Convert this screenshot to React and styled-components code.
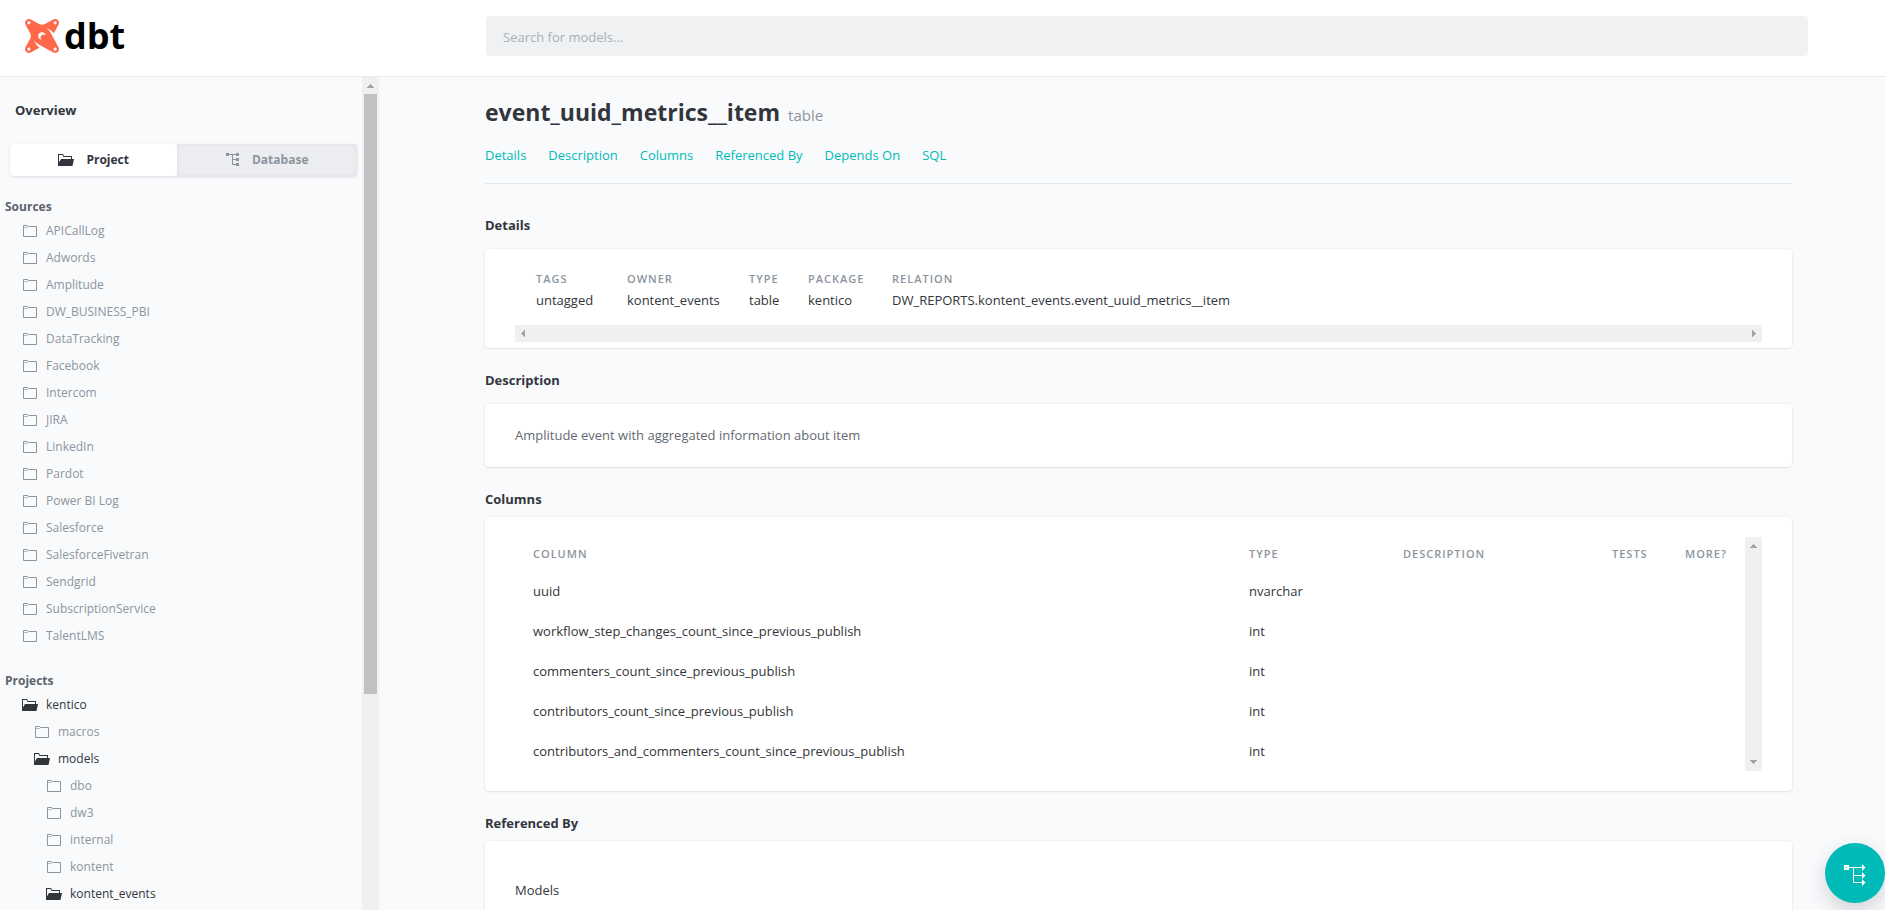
import { useState } from 'react';
import styled, { createGlobalStyle } from 'styled-components';
import { SiDbt } from 'react-icons/si';

const GlobalStyle = createGlobalStyle`
  * { box-sizing: border-box; }
  body {
    margin: 0;
    background: #f9fafc;
    color: #32363c;
    font-family: "Segoe UI", "Open Sans", "Noto Sans", sans-serif;
    font-size: 13px;
    line-height: 20px;
  }
`

const Page = styled.div`
  display: flex;
  flex-direction: column;
  height: 100vh;
  overflow: hidden;
`
const Header = styled.header`
  display: flex;
  flex: none;
  align-items: flex-start;
  padding: 16px 77px 20px 25px;
  background: #fff;
  border-bottom: 1px solid #e9ebee;
`
const Logo = styled.a`
  display: flex;
  align-items: center;
  gap: 5px;
  width: 461px;
  height: 40px;
  color: #000;
  font-size: 36px;
  font-weight: 700;
  line-height: 40px;
  text-decoration: none;
  svg { color: #ff694a; }
`
const Search = styled.input`
  flex: 1;
  height: 40px;
  padding: 1px 17px 0;
  border: none;
  border-radius: 4px;
  outline: none;
  background: #eff1f3;
  color: #32363c;
  font: inherit;
  &::placeholder { color: #a8b0b8; opacity: 1; }
`
const Body = styled.div`
  display: flex;
  flex: 1;
  min-height: 0;
`
const Sidebar = styled.aside`
  display: flex;
  flex: none;
  width: 379px;
`
const SidebarContent = styled.nav`
  flex: 1;
  overflow: hidden;
  font-size: 12px;
`
const Overview = styled.a`
  display: block;
  padding: 23px 15px 24px;
  color: #32363c;
  font-size: 13px;
  font-weight: 700;
  text-decoration: none;
`
const Tabs = styled.div`
  display: flex;
  height: 32px;
  margin: 0 5px 21px 10px;
  border-radius: 4px;
  background: #ebedf1;
  box-shadow: 0 1px 3px rgba(50, 54, 60, 0.15);
`
const Tab = styled.button`
  display: flex;
  flex: ${p => (p.$active ? '167' : '180')};
  align-items: center;
  justify-content: center;
  gap: 12px;
  border: none;
  border-radius: 4px;
  background: ${p => (p.$active ? '#fff' : '#ebedf1')};
  box-shadow: ${p => (p.$active ? 'none' : 'inset 0 0 4px rgba(50, 54, 60, 0.08)')};
  color: ${p => (p.$active ? '#32363c' : '#8c959e')};
  font: inherit;
  font-weight: 700;
`
const TreeTitle = styled.h2`
  margin: 0;
  padding: 0 5px;
  color: #5c636b;
  font-size: 12px;
  font-weight: 700;
  line-height: 20px;
`
const Tree = styled.ul`
  margin: 0 0 22px;
  padding: 0;
  list-style: none;
`
const TreeItem = styled.a`
  display: flex;
  align-items: center;
  gap: 8px;
  height: 27px;
  padding-left: ${p => 22 + p.$level * 12}px;
  color: ${p => (p.$open ? '#32363c' : '#8c959e')};
  text-decoration: none;
`
const Scrollbar = styled.div`
  display: flex;
  flex: none;
  flex-direction: ${p => (p.$horizontal ? 'row' : 'column')};
  justify-content: space-between;
  width: ${p => (p.$horizontal ? 'auto' : '17px')};
  height: ${p => (p.$horizontal ? '17px' : 'auto')};
  background: #f0f0f0;
`
const ScrollArrow = styled.span`
  display: flex;
  flex: none;
  align-items: center;
  justify-content: center;
  width: 17px;
  height: 17px;
  color: #a3a3a3;
`
const Thumb = styled.div`
  flex: 0 0 72%;
  width: 13px;
  margin: 0 2px auto;
  background: #c1c1c1;
`
const Main = styled.main`
  flex: 1;
  min-width: 0;
  padding: 19px 93px 0 106px;
`
const Title = styled.h1`
  display: flex;
  align-items: baseline;
  gap: 8px;
  height: 32px;
  margin: 0;
  font-size: 23px;
  font-weight: 700;
  line-height: 32px;
  small {
    color: #8c959e;
    font-size: 15px;
    font-weight: 400;
    line-height: 20px;
  }
`
const Links = styled.nav`
  display: flex;
  gap: 22px;
  padding: 17px 0 18px;
  margin-bottom: 31px;
  border-bottom: 1px solid #e4e7ea;
  a {
    color: #00bab8;
    text-decoration: none;
  }
`
const Section = styled.section`
  margin-bottom: 22px;
`
const SectionTitle = styled.h2`
  margin: 0 0 ${p => (p.$tight ? '8px' : '14px')};
  font-size: 13px;
  font-weight: 700;
  line-height: 20px;
`
const Card = styled.div`
  padding: ${p => p.$padding || '20px 30px'};
  border-radius: 4px;
  background: #fff;
  box-shadow: 0 0 2px rgba(50, 54, 60, 0.12), 0 1px 2px rgba(50, 54, 60, 0.08);
`
const DetailList = styled.dl`
  display: flex;
  margin: 0;
  padding: 20px 21px 15px;
`
const Detail = styled.div`
  flex: none;
  width: ${p => p.$width};
  white-space: nowrap;
`
const DetailLabel = styled.dt`
  margin-bottom: 1px;
  color: #8c959e;
  font-size: 11px;
  font-weight: 600;
  letter-spacing: 1px;
  text-transform: uppercase;
`
const DetailValue = styled.dd`
  margin: 0;
`
const Description = styled.p`
  margin: 0;
  color: #646970;
  line-height: 23px;
`
const TableWrap = styled.div`
  display: flex;
`
const Table = styled.table`
  flex: 1;
  table-layout: fixed;
  border-collapse: collapse;
  th, td {
    height: 40px;
    padding: 0 0 0 18px;
    text-align: left;
  }
  th {
    height: 34px;
    color: #8c959e;
    font-size: 11px;
    font-weight: 600;
    letter-spacing: 1px;
    text-transform: uppercase;
  }
`
const Fab = styled.button`
  position: fixed;
  right: 0;
  bottom: 7px;
  display: flex;
  align-items: center;
  justify-content: center;
  width: 60px;
  height: 60px;
  padding: 3px 0 0;
  border: none;
  border-radius: 50%;
  background: #00bab8;
  box-shadow: 0 8px 20px rgba(50, 54, 60, 0.2);
  color: #fff;
`

const sources = [
  'APICallLog', 'Adwords', 'Amplitude', 'DW_BUSINESS_PBI', 'DataTracking', 'Facebook',
  'Intercom', 'JIRA', 'LinkedIn', 'Pardot', 'Power BI Log', 'Salesforce',
  'SalesforceFivetran', 'Sendgrid', 'SubscriptionService', 'TalentLMS',
].map(name => ({ name, level: 0 }))

const projects = [
  { name: 'kentico', level: 0, open: true },
  { name: 'macros', level: 1 },
  { name: 'models', level: 1, open: true },
  { name: 'dbo', level: 2 },
  { name: 'dw3', level: 2 },
  { name: 'internal', level: 2 },
  { name: 'kontent', level: 2 },
  { name: 'kontent_events', level: 2, open: true },
]

const links = ['Details', 'Description', 'Columns', 'Referenced By', 'Depends On', 'SQL']

const details = [
  { label: 'Tags', value: 'untagged', width: '91px' },
  { label: 'Owner', value: 'kontent_events', width: '122px' },
  { label: 'Type', value: 'table', width: '59px' },
  { label: 'Package', value: 'kentico', width: '84px' },
  { label: 'Relation', value: 'DW_REPORTS.kontent_events.event_uuid_metrics__item', width: 'auto' },
]

const columns = [
  { name: 'uuid', type: 'nvarchar' },
  { name: 'workflow_step_changes_count_since_previous_publish', type: 'int' },
  { name: 'commenters_count_since_previous_publish', type: 'int' },
  { name: 'contributors_count_since_previous_publish', type: 'int' },
  { name: 'contributors_and_commenters_count_since_previous_publish', type: 'int' },
]

const arrows = {
  up: 'M5 10h7v1H5zM6 9h5v1H6zM7 8h3v1H7zM8 7h1v1H8z',
  down: 'M5 6h7v1H5zM6 7h5v1H6zM7 8h3v1H7zM8 9h1v1H8z',
  left: 'M9 5h1v7H9zM8 6h1v5H8zM7 7h1v3H7zM6 8h1v1H6z',
  right: 'M7 5h1v7H7zM8 6h1v5H8zM9 7h1v3H9zM10 8h1v1H10z',
}

function Arrow({ dir }) {
  return (
    <ScrollArrow>
      <svg width="17" height="17" fill="currentColor"><path d={arrows[dir]} /></svg>
    </ScrollArrow>
  )
}

function FolderIcon({ open }) {
  return open ? (
    <svg width="16" height="12" viewBox="0 0 16 12" fill="currentColor">
      <path d="M0 0h5l1 2h8v3h-1V3H5.500L4.500 1H1v8L0 11z" />
      <path d="M3 5h13l-1.500 7H0V10z" />
    </svg>
  ) : (
    <svg width="16" height="12" viewBox="0 0 16 12" fill="none" stroke="currentColor">
      <path d="M1.500 11.500V.5h4l1 1h8v10z" />
      <path d="M2 2.500h4" strokeOpacity="0.6" />
    </svg>
  )
}

function TreeIcon() {
  return (
    <svg width="14" height="14" viewBox="0 0 14 14" fill="currentColor">
      <path d="M0 0h3v1h7V0h3v3h-3V2H7v4h3V5h3v3h-3V7H7v4h3v-1h3v3h-3v-1H6V2H3v1H0z" />
    </svg>
  )
}

function GraphIcon() {
  return (
    <svg width="22" height="22" viewBox="0 0 22 22" fill="currentColor">
      <path fillRule="evenodd" d="M0 1h5v5H0zM2 3v1h1V3z" />
      <path d="M5 3h13v1H5zM9 4h1v15H9zM10 11h8v1h-8zM10 18h8v1h-8z" />
      <path d="M18 0l3.500 3.500-3.500 3.500zM18 8l3.500 3.500-3.500 3.500zM18 15l3.500 3.500-3.500 3.500z" />
    </svg>
  )
}

function FolderTree({ title, items }) {
  return (
    <>
      <TreeTitle>{title}</TreeTitle>
      <Tree>
        {items.map(item => (
          <li key={item.name}>
            <TreeItem href="#" $level={item.level} $open={item.open}>
              <FolderIcon open={item.open} />
              {item.name}
            </TreeItem>
          </li>
        ))}
      </Tree>
    </>
  )
}

function App() {
  const [query, setQuery] = useState('')
  const [tab, setTab] = useState('project')

  return (
    <Page>
      <GlobalStyle />
      <Header>
        <Logo href="#"><SiDbt size={34} />dbt</Logo>
        <Search
          type="text"
          aria-label="Search for models"
          placeholder="Search for models..."
          value={query}
          onChange={e => setQuery(e.target.value)}
        />
      </Header>
      <Body>
        <Sidebar>
          <SidebarContent>
            <Overview href="#">Overview</Overview>
            <Tabs>
              <Tab $active={tab === 'project'} onClick={() => setTab('project')}>
                <FolderIcon open />Project
              </Tab>
              <Tab $active={tab === 'database'} onClick={() => setTab('database')}>
                <TreeIcon />Database
              </Tab>
            </Tabs>
            <FolderTree title="Sources" items={sources} />
            <FolderTree title="Projects" items={projects} />
          </SidebarContent>
          <Scrollbar>
            <Arrow dir="up" />
            <Thumb />
          </Scrollbar>
        </Sidebar>
        <Main>
          <Title>event_uuid_metrics__item<small>table</small></Title>
          <Links>
            {links.map(link => <a key={link} href="#">{link}</a>)}
          </Links>

          <Section>
            <SectionTitle>Details</SectionTitle>
            <Card $padding="0 30px 6px">
              <DetailList>
                {details.map(d => (
                  <Detail key={d.label} $width={d.width}>
                    <DetailLabel>{d.label}</DetailLabel>
                    <DetailValue>{d.value}</DetailValue>
                  </Detail>
                ))}
              </DetailList>
              <Scrollbar $horizontal>
                <Arrow dir="left" />
                <Arrow dir="right" />
              </Scrollbar>
            </Card>
          </Section>

          <Section>
            <SectionTitle>Description</SectionTitle>
            <Card>
              <Description>Amplitude event with aggregated information about item</Description>
            </Card>
          </Section>

          <Section>
            <SectionTitle $tight>Columns</SectionTitle>
            <Card>
              <TableWrap>
                <Table>
                  <colgroup>
                    <col />
                    <col width="154" />
                    <col width="209" />
                    <col width="73" />
                    <col width="78" />
                  </colgroup>
                  <thead>
                    <tr>
                      <th>Column</th>
                      <th>Type</th>
                      <th>Description</th>
                      <th>Tests</th>
                      <th>More?</th>
                    </tr>
                  </thead>
                  <tbody>
                    {columns.map(c => (
                      <tr key={c.name}>
                        <td>{c.name}</td>
                        <td>{c.type}</td>
                        <td></td>
                        <td></td>
                        <td></td>
                      </tr>
                    ))}
                  </tbody>
                </Table>
                <Scrollbar>
                  <Arrow dir="up" />
                  <Arrow dir="down" />
                </Scrollbar>
              </TableWrap>
            </Card>
          </Section>

          <Section>
            <SectionTitle $tight>Referenced By</SectionTitle>
            <Card $padding="39px 30px">Models</Card>
          </Section>
        </Main>
      </Body>
      <Fab aria-label="View lineage graph"><GraphIcon /></Fab>
    </Page>
  )
}

export default App;
